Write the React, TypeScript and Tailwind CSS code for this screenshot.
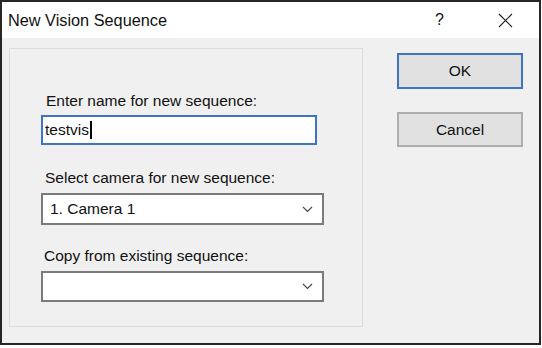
import React from "react";

const font = { fontFamily: '"Liberation Sans", Arial, sans-serif' };

function Chevron() {
  return (
    <svg width="11" height="7" viewBox="0 0 11 7" className="shrink-0">
      <path d="M1 1 L5.5 5.5 L10 1" fill="none" stroke="#4a4a4a" strokeWidth="1.2" />
    </svg>
  );
}

function Combo({ value, h }: { value?: string; h: "tall" | "short" }) {
  return (
    <div
      className={
        (h === "tall" ? "h-[32px] " : "h-[31px] ") +
        "flex w-[283px] items-center justify-between border-2 border-[#7a7a7a] bg-white pl-[7px] pr-[9px]"
      }
    >
      <span className="text-[15.5px] leading-none text-[#111]">{value}</span>
      <Chevron />
    </div>
  );
}

export default function App() {
  return (
    <div className="h-[348px] w-[542px] bg-white" style={font}>
      <div className="flex h-[345px] w-[541px] flex-col border-2 border-[#262626]">
        {/* title bar */}
        <div className="flex h-[36px] shrink-0 items-center bg-white">
          <span className="pl-[6px] text-[16.3px] text-[#111]">New Vision Sequence</span>
          <span className="ml-auto mr-[54px] text-[16px] text-[#111]">?</span>
          <svg width="15" height="15" viewBox="0 0 15 15" className="mr-[26px]">
            <path d="M1 1 L14 14 M14 1 L1 14" stroke="#222" strokeWidth="1.1" />
          </svg>
        </div>

        {/* body */}
        <div className="flex flex-1 gap-[34px] bg-[#f0f0f0] pl-[7px] pt-[10px]">
          <div className="flex h-[279px] w-[354px] flex-col border border-[#dcdcdc] pl-[31px] pt-[43px]">
            <label className="pl-[5px] text-[15.5px] leading-[17px] text-[#111]">Enter name for new sequence:</label>
            <div className="mt-[6px] flex h-[30px] w-[276px] items-center border-2 border-[#3d74c8] bg-white pl-[2px]">
              <span className="text-[15.5px] leading-none text-[#111]">testvis</span>
              <span className="ml-[1px] h-[18px] w-[2px] bg-black" />
            </div>

            <label className="mt-[24px] pl-[4px] text-[15.5px] leading-[17px] text-[#111]">Select camera for new sequence:</label>
            <div className="mt-[7px]">
              <Combo value="1. Camera 1" h="tall" />
            </div>

            <label className="mt-[22px] pl-[3px] text-[15.5px] leading-[17px] text-[#111]">Copy from existing sequence:</label>
            <div className="mt-[7px]">
              <Combo h="short" />
            </div>
          </div>

          <div className="flex flex-col gap-[23px] pt-[5px]">
            <button className="h-[36px] w-[126px] border-2 border-[#3d74c8] bg-[#e1e1e1] text-[15.5px] text-[#111]">
              OK
            </button>
            <button className="h-[35px] w-[126px] border-2 border-[#adadad] bg-[#e1e1e1] text-[15.5px] text-[#111]">
              Cancel
            </button>
          </div>
        </div>
      </div>
    </div>
  );
}
